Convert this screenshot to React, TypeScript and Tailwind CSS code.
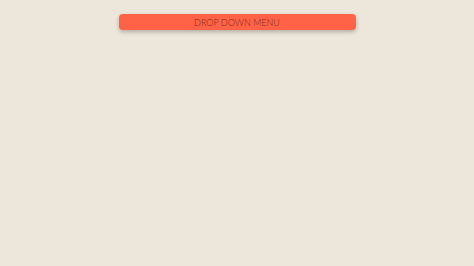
export default function App() {
  return (
    <div className="min-h-screen w-full bg-[#ede6da] pt-[14px]">
      <div className="mx-auto w-1/2">
        <button className="flex h-[16px] w-full items-center justify-center rounded-[4px] bg-[#ff6347] text-[9px] font-light uppercase leading-none text-[#7f2618] shadow-[0_2px_4px_rgba(0,0,0,0.25)] [font-family:Lato,sans-serif]">
          Drop Down Menu
        </button>
      </div>
    </div>
  )
}
